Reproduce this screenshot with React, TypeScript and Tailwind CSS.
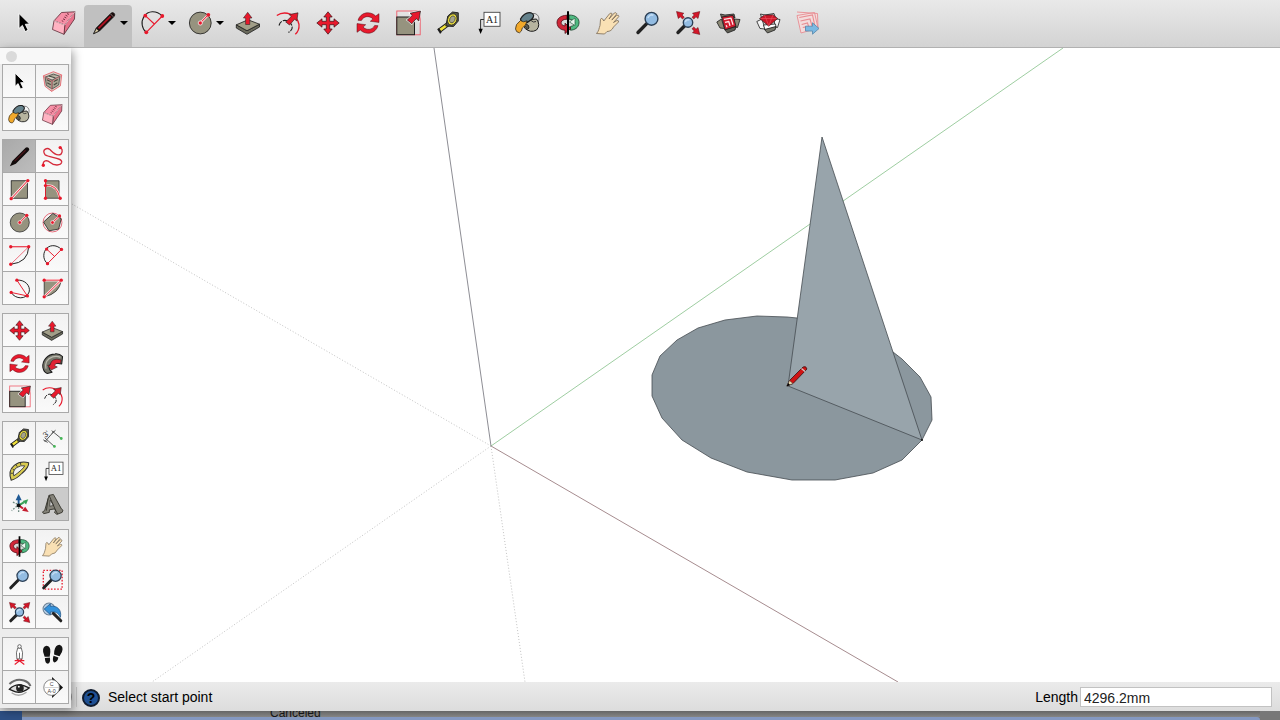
import React, { ReactNode, useState } from 'react';

const RED = '#e8192c';
const STONE = '#96937f';
const INK = '#1c1c1c';

const Dot = ({ x, y }: { x: number; y: number }) => <circle cx={x} cy={y} r="1.9" fill={RED} />;

const Lens = ({ x = 15.5, y = 7.8, r = 6.4 }: { x?: number; y?: number; r?: number }) => (
  <g>
    <path d={`M${x - r * 0.75} ${y + r * 0.75} L2 21.5`} stroke="#222" strokeWidth="3.4" strokeLinecap="round" />
    <circle cx={x} cy={y} r={r} fill="#93bce2" stroke="#2b3f55" strokeWidth="1.4" />
    <path d={`M${x - r * 0.55} ${y - r * 0.1} A${r * 0.6} ${r * 0.6} 0 0 1 ${x + r * 0.3} ${y - r * 0.55}`} stroke="#c3ddf4" strokeWidth="1.6" fill="none" />
  </g>
);

const icons: Record<string, ReactNode> = {
  select: (
    <path d="M7 2.5 V17.5 L10.4 14.4 L13.2 20.6 L16.2 19.2 L13.3 13.3 L17.6 13 Z" fill="#000" stroke="#fff" strokeWidth="0.9" />
  ),
  eraser: (
    <g stroke="#5a2a35" strokeWidth="0.8" strokeLinejoin="round">
      <path d="M9.5 1.5 L22.8 0.8 L12.8 14 L2 9.8 Z" fill="#f78fa6" />
      <path d="M22.8 0.8 L22.5 8 L12 23.3 L12.8 14 Z" fill="#e8718a" />
      <path d="M2 9.8 L12.8 14 L12 23.3 L0.5 18.5 Z" fill="#ffb3c2" />
      <path d="M2 9.8 L12.8 14 L22.8 0.8" fill="none" stroke="#ffd9e0" />
      <path d="M9.8 9.7 L11.3 10.4 M11 7.8 L13 8.8 M12.3 6 L14.3 7 M13.5 4.2 L15.5 5.2 M15 2.6 L17 3.4" stroke="#7b3042" strokeWidth="1" />
    </g>
  ),
  pencil: (
    <g>
      <path d="M1.5 22.8 L4.2 17 L19 2.2 Q20.5 0.8 22.3 2.4 Q23.6 4 22 5.5 L7.5 20 Z" fill="#1e0c0d" stroke="#111" strokeWidth="0.7" />
      <path d="M6.5 17.3 L18.5 5.3" stroke="#b31222" strokeWidth="1.8" />
      <path d="M1.8 22.5 L4.4 17.5 L7 20 Z" fill="#d8cba6" stroke="#111" strokeWidth="0.6" />
      <path d="M18.6 3 L21.3 5.8" stroke="#9a8484" strokeWidth="0.8" />
    </g>
  ),
  darkPencil: (
    <g>
      <path d="M1 23 L3.8 17 L19 2 Q20.5 0.6 22.5 2.2 Q24 4 22.3 5.7 L7.8 20.2 Z" fill="#110b0b" />
      <path d="M6.5 17.3 L19 4.8" stroke="#4a1318" strokeWidth="1.4" />
    </g>
  ),
  arc: (
    <g fill="none">
      <path d="M22.3 5 C16 -1 8 -0.5 4 5.5 C0.5 11 2 18 6.3 21.3" stroke={INK} strokeWidth="1.1" />
      <path d="M22.3 5 L6.3 21.3 M5.3 4.7 L14.3 13" stroke={RED} strokeWidth="1.1" />
      <Dot x={5.3} y={4.7} /><Dot x={22.3} y={5} /><Dot x={6.3} y={21.3} />
    </g>
  ),
  circle: (
    <g>
      <circle cx="12.3" cy="12" r="10.9" fill={STONE} stroke={INK} strokeWidth="0.8" />
      <path d="M12.3 12 L20.3 3.8" stroke="#ffd9dc" strokeWidth="2.4" />
      <path d="M12.3 12 L20.3 3.8" stroke={RED} strokeWidth="1" />
      <circle cx="12.3" cy="12" r="2.1" fill={RED} stroke="#fff" strokeWidth="0.7" />
      <Dot x={20.3} y={3.8} />
    </g>
  ),
  pushPull: (
    <g stroke={INK} strokeWidth="0.8" strokeLinejoin="round">
      <path d="M0.3 13.8 V17 L11 23.3 L23.5 16 V13.2 L11 19.7 Z" fill="#6b6b5d" />
      <path d="M0.3 13.8 L12 8.8 L23.5 13.2 L11 19.7 Z" fill="#a19e88" />
      <path d="M11.7 1.3 L16 7 H13.8 V13.5 H9.6 V7 H7.4 Z" fill={RED} strokeWidth="0.5" />
    </g>
  ),
  offset: (
    <g fill="none">
      <path d="M0.8 4.5 C9 -1 21 3.5 23 13.5 Q23.5 19.5 19.3 23.3" stroke={RED} strokeWidth="1.3" />
      <path d="M3 14.5 C4.5 9 10 7.5 14.3 12 Q19 17.5 12.5 21.5" stroke={INK} strokeWidth="1.1" strokeDasharray="5 1.2" />
      <path d="M22 1.8 L20.8 10 L18.6 8.2 L13.5 14 L9.7 10.9 L15.2 5.6 L13.2 3.6 Z" fill={RED} stroke={INK} strokeWidth="0.6" />
    </g>
  ),
  move: (
    <path
      d="M12 0.8 L16.2 6 H13.7 V10.3 H18 V7.8 L23.2 12 L18 16.2 V13.7 H13.7 V18 H16.2 L12 23.2 L7.8 18 H10.3 V13.7 H6 V16.2 L0.8 12 L6 7.8 V10.3 H10.3 V6 H7.8 Z"
      fill={RED}
      stroke="#3a1014"
      strokeWidth="0.7"
    />
  ),
  rotate: (
    <g fill={RED} stroke="#4d0d14" strokeWidth="0.5" strokeLinejoin="round">
      <path d="M2 9.3 C4.5 1 14 -0.5 19.7 5 L23 2.7 V11.4 L14.3 10.3 L17 7.9 C13 4.2 7.5 5.2 5.3 9.6 Z" />
      <path transform="rotate(180 12 12)" d="M2 9.3 C4.5 1 14 -0.5 19.7 5 L23 2.7 V11.4 L14.3 10.3 L17 7.9 C13 4.2 7.5 5.2 5.3 9.6 Z" />
    </g>
  ),
  scale: (
    <g>
      <rect x="0.8" y="0" width="23.4" height="23.8" fill="none" stroke="#ef5a68" strokeWidth="0.9" />
      <rect x="0.8" y="6" width="17.7" height="17.7" fill={STONE} stroke={INK} strokeWidth="1" />
      <path d="M24.5 0 L22.8 10 L20.2 7.7 L15.8 12.8 L11.3 9 L16.3 4.5 L14 2.3 Z" fill={RED} stroke="#fff" strokeWidth="1.8" />
      <path d="M24.5 0 L22.8 10 L20.2 7.7 L15.8 12.8 L11.3 9 L16.3 4.5 L14 2.3 Z" fill={RED} stroke={INK} strokeWidth="0.7" />
    </g>
  ),
  tape: (
    <g stroke={INK} strokeLinejoin="round">
      <path d="M11.5 13.5 L3 19.8" strokeWidth="4.6" />
      <path d="M12 13.2 L4.3 18.9" stroke="#f0e13a" strokeWidth="2.6" />
      <path d="M2 17.8 L4.8 22.3" strokeWidth="1.8" />
      <path d="M11.8 5 L16.5 1 L22.3 1.8 L22.3 10 L17.5 15.5 L9.8 15 Z" fill="#55554c" strokeWidth="0.9" />
      <ellipse cx="16.3" cy="8.3" rx="4.5" ry="5.8" fill="#efe23e" strokeWidth="0.7" transform="rotate(25 16 8.3)" />
      <ellipse cx="16.5" cy="8.2" rx="2.6" ry="3.7" fill="#a5a48c" strokeWidth="0.5" transform="rotate(25 16 8)" />
    </g>
  ),
  text: (
    <g>
      <path d="M8 8.5 H4.6 V19" fill="none" stroke={INK} strokeWidth="0.9" />
      <path d="M2.5 17.8 H6.8 L4.6 23 Z" fill="#000" />
      <rect x="8" y="1.3" width="16" height="14" fill="#fff" stroke="#444" strokeWidth="0.9" />
      <text x="16" y="11.7" textAnchor="middle" fontSize="10" fontFamily="Liberation Serif, serif" fill="#222">A1</text>
    </g>
  ),
  paint: (
    <g stroke={INK} strokeWidth="1">
      <ellipse cx="18" cy="8" rx="5" ry="5.5" fill="none" stroke="#777" />
      <path d="M10 9 L20.5 8 Q25 14 20.5 19 Q14.5 22.5 8.5 17 Z" fill="#b7b49f" />
      <path d="M4.5 8 Q9 0.5 15 1.8 Q20 4 15.5 8.5 Q10 13.5 5.5 11 Z" fill="#64818b" strokeWidth="1.2" />
      <path d="M8 14 Q10.5 12 12.5 14.5 Q14 17.5 11.5 18.5 Z" fill="#5b5a50" strokeWidth="0.8" />
      <path d="M15 9.5 Q17.5 12 20 10.5" fill="none" stroke="#333" />
      <path d="M4.5 9.5 Q-1 13.5 -0.5 18 Q0 21.5 3.5 21.8 Q6 20.5 6.3 17 Q10.5 14.5 11 9.8 Q7.5 12 4.5 9.5 Z" fill="#f2a92b" strokeWidth="0.7" />
    </g>
  ),
  orbit: (
    <g strokeLinejoin="round">
      <ellipse cx="12" cy="11.5" rx="8" ry="5.5" fill="#d9dcda" />
      <path d="M13 4 C20 4 23.3 7.5 23 12 C22.5 17 18.5 19 14.5 19.2 V15.5 C17.5 15 18.8 13.5 18.8 11.8 C18.5 9.5 16.5 8.3 13 8.2 Z" fill="#4fb981" stroke="#183f2a" strokeWidth="0.8" />
      <path d="M11 4.2 C4 4.5 0.8 8 1 12 C1.5 16.5 4.5 18.8 9 19.3 V22.5 L15 17.3 L9 12.2 V15 C6 14.5 5 13 5.2 11.5 C5.5 9.3 7.5 8.4 11 8.2 Z" fill="#cf2637" stroke="#4e0d16" strokeWidth="0.8" />
      <path d="M19 7 L13.5 11 L19 14.5 Z" fill="#eaf6ef" stroke="#2d6546" strokeWidth="0.7" />
      <path d="M12 0.3 V23.7" stroke="#000" strokeWidth="2" />
    </g>
  ),
  pan: (
    <path
      d="M0.5 22.5 C3 20 3 17 4 14.5 L4.5 8.5 Q5 6.5 6.7 8 L7.8 10 L13.5 2.8 Q15.2 1.2 16.2 2.8 L13 8 L18.3 2 Q20 1 20.8 2.8 L15.8 9 L20.8 4.3 Q22.8 3.6 22.8 5.6 L17.5 11.5 L21 9.5 Q23 9.3 22.5 11 L17.5 16 Q15.5 20.5 11 20.5 L8.5 23 Z"
      fill="#f9e0b4"
      stroke="#7a6a54"
      strokeWidth="0.8"
      strokeLinejoin="round"
    />
  ),
  zoom: <Lens />,
  zoomWindow: (
    <g>
      <rect x="1.5" y="1.5" width="21.5" height="21.5" fill="none" stroke={RED} strokeWidth="1.5" strokeDasharray="1.8 1.8" />
      <Lens />
    </g>
  ),
  zoomExtents: (
    <g>
      <Lens x={12} y={11.5} r={4.7} />
      <g fill="#d31729" stroke="#5a0710" strokeWidth="0.5">
        <path d="M23.8 0.5 L22 7.5 L20 5.8 L17.8 8 L16 6.3 L18.2 4 L16.5 2.2 Z" />
        <path d="M0.5 0.5 L2.3 7.5 L4.3 5.8 L6.5 8 L8.3 6.3 L6.1 4 L7.8 2.2 Z" />
        <path d="M23.8 23.5 L22 16.5 L20 18.2 L17.8 16 L16 17.7 L18.2 20 L16.5 21.8 Z" />
      </g>
    </g>
  ),
  warehouse: (
    <g stroke={INK} strokeWidth="0.8" strokeLinejoin="round">
      <path d="M0.8 11 L5.5 8 L8.5 17.5 L4 17 Z M18 8 L24 8.5 L21.5 16.5 L19 16 Z" fill="#8c8a76" />
      <path d="M4.5 3 L9 4 L18 3 L19 7 L17 5 L5.5 6.5 Z" fill="#77776b" />
      <path d="M8.5 18.5 L20 15.5 L19 19 L11.5 22 Z" fill="#5e5d54" />
      <path d="M5.8 6 L17 4.3 L20 15.3 L9 18.8 Z" fill="#d21c2e" />
      <path d="M8 8.4 L15 7.2 L17 13.7 M9 11.4 L12.8 10.5 L14 14.8 M10.2 14.3 L11 16.3" fill="none" stroke="#ffe2e4" strokeWidth="1.3" />
    </g>
  ),
  extension: (
    <g stroke={INK} strokeWidth="0.8" strokeLinejoin="round">
      <path d="M0.8 10.5 L6 8 L9 18 L4 17.5 Z M18 7.5 L24 8.5 L21.5 16.5 L19 16 Z" fill="#f5f5f5" />
      <path d="M4.5 3 L9 4 L18 2.5 L19.5 7 L6 9 Z" fill="#dedede" />
      <path d="M7.5 14 L19.5 13 L20 16 L9 19 Z" fill="#fff" />
      <path d="M8.5 18.5 L20 15.5 L19 19 L11.5 22 Z" fill="#77776b" />
      <path d="M3.5 7.5 L8.5 4 L17 3.8 L21.7 7.5 L12.8 15.2 Z" fill="#cb1728" strokeWidth="0.6" />
      <path d="M4.5 7.5 H20.5 M8.5 4 L10 7.5 L12.8 15 L15.5 7.5 L17 4" fill="none" stroke="#ef5665" strokeWidth="0.6" />
    </g>
  ),
  layout: (
    <g fill="none" stroke="#e88c92" strokeWidth="0.9">
      <path d="M1 4.5 L18.5 1.5 L22 17 L5 22 Z M1 1 L21.5 2.5 L22 17" fill="#f3dcdc" />
      <path d="M3.3 6.5 L16.5 4 L19 15.5 M4.5 10 L14 8 L16.3 16 M5.7 13.5 L11.5 12 L13.2 17.5 M6.8 16.5 L9.5 16 L10.3 19" strokeWidth="1.1" />
      <path d="M9.5 15.2 H16.5 V11.8 L23 17.5 L16.5 23.2 V20 H9.5 Z" fill="#7bb9e2" stroke="#5d8caf" />
    </g>
  ),
  component: (
    <g strokeLinejoin="round">
      <path d="M1.5 5.5 L13 0.8 L22.5 4.5 L21 17 L11 23.3 L3.5 17.5 Z" fill="#d8d3c6" stroke="#e45561" strokeWidth="0.9" />
      <path d="M3.5 7 L13 3.5 L20.5 6 L19 16 L11.5 20.5 L5 16.5 Z M3.5 7 L11.5 10.3 L20.5 6 M11.5 10.3 V20.5" fill="#aaa694" stroke="#444" strokeWidth="0.9" />
      <path d="M5.5 10 L10 12 M6 13.5 L10 15.7 M13.5 12 L18 9.8 M13.5 16 L17.5 13.5 M8 5.7 L15.5 8" stroke="#4a4a41" strokeWidth="1.3" />
      <path d="M1.5 5.5 L11.5 12 L22.5 4.5 M11.5 12 L11 23.3" fill="none" stroke="#ee6773" strokeWidth="0.7" />
    </g>
  ),
  freehand: (
    <g>
      <path d="M1.5 22 C0.5 16 6 16 9 18.5 C14 23 21.5 22.5 22.5 18.5 C23.5 13 8 13.5 3.5 10 C-1 4 6 1.5 9 4 C12 7 17 13 22 9 C24 5.5 23 2.5 20.5 1.5" fill="none" stroke="#d52a3a" strokeWidth="1.5" />
      <Dot x={1.5} y={22} /><Dot x={20.8} y={1.8} />
    </g>
  ),
  rectangle: (
    <g>
      <rect x="2.5" y="2" width="18.5" height="20" fill={STONE} stroke={INK} strokeWidth="0.9" />
      <path d="M2.5 22.5 L21.5 1.8" stroke="#ffe7e9" strokeWidth="3" />
      <path d="M2.5 22.5 L21.5 1.8" stroke={RED} strokeWidth="1.1" />
      <Dot x={2.5} y={22.5} /><Dot x={21.5} y={1.8} />
    </g>
  ),
  rotatedRect: (
    <g>
      <path d="M4 2 H19.5 V22 H4 Z" fill={STONE} stroke={INK} strokeWidth="0.8" />
      <path d="M4 7.5 Q17 5.5 20.5 22" fill="none" stroke="#ffdfe1" strokeWidth="2.5" />
      <path d="M4 2 V22 M4 7.5 Q17 5.5 20.5 22" fill="none" stroke={RED} strokeWidth="1" />
      <Dot x={4} y={2} /><Dot x={4} y={7.5} /><Dot x={4} y={22} /><Dot x={20.8} y={22} />
    </g>
  ),
  polygon: (
    <g>
      <circle cx="12" cy="12" r="10.8" fill="none" stroke="#e2596a" strokeWidth="1" />
      <path d="M12.5 1.6 L22 7.8 L19 19.5 L8 21.5 L1.8 11.5 Z" fill={STONE} stroke={INK} strokeWidth="0.9" />
      <path d="M12 12 L20 4.5" stroke="#ffd9dc" strokeWidth="2.4" />
      <path d="M12 12 L20 4.5" stroke={RED} />
      <circle cx="12" cy="12" r="2.1" fill={RED} stroke="#fff" strokeWidth="0.7" />
      <Dot x={20} y={4.5} />
    </g>
  ),
  chordArc: (
    <g fill="none">
      <path d="M22.5 2 Q22 20 2 22" stroke={INK} strokeWidth="1.1" />
      <path d="M2 2 H22.5" stroke={RED} strokeWidth="1.2" />
      <path d="M22.5 2 L2 22" stroke="#ec6c7c" strokeWidth="1.1" />
      <Dot x={2} y={2} /><Dot x={22.5} y={2} /><Dot x={2} y={22} />
    </g>
  ),
  threePointArc: (
    <g fill="none">
      <path d="M9 2.5 C18 1.5 25 9 23 16 C20 25 7 24.5 2.5 16.5" stroke={INK} strokeWidth="1.1" />
      <path d="M9 2.5 L21 20.5 L2.5 16.5" stroke={RED} strokeWidth="1.1" />
      <Dot x={9} y={2.5} /><Dot x={21} y={20.5} /><Dot x={2.5} y={16.5} />
    </g>
  ),
  pie: (
    <g>
      <path d="M2.5 2.5 H22 Q20 18 2.5 21.5 Z" fill={STONE} stroke={INK} strokeWidth="0.8" />
      <path d="M2.5 2.5 H22 L2.5 21.5" fill="none" stroke="#ffdfe1" strokeWidth="2.8" />
      <path d="M2.5 2.5 H22 L2.5 21.5" fill="none" stroke={RED} strokeWidth="0.9" />
      <Dot x={2.5} y={2.5} /><Dot x={22} y={2.5} /><Dot x={2.5} y={21.5} />
    </g>
  ),
  followMe: (
    <g stroke={INK} strokeLinejoin="round">
      <path d="M23.5 4 Q20 0.5 15 1 C6 1.5 0 9 1 16.5 Q2 22 6 23.5 L11.5 22 Q7 18.5 8.5 14.5 Q11 10 22.5 12.5 Z" fill="#77776c" strokeWidth="1.2" />
      <path d="M4.5 18 Q2.5 8 12 4.5 Q17 3 21 5" fill="none" stroke="#b9b8ad" strokeWidth="1.4" />
      <path d="M22 8 Q11 4.5 9 14 H6.5 L10.5 19.5 L17.5 16 L14.5 14.5 Q15 11 21 12 Z" fill="#df2233" strokeWidth="0.6" />
    </g>
  ),
  dimension: (
    <g fill="none" stroke="#444" strokeWidth="1">
      <path d="M3 16 L14 3.5 M3 11 L14 21 M11 3 L22 12 M1.5 13.5 L6.5 16.5 M11 6.5 L15.5 2.5" />
      <text x="1" y="9" fontSize="9" fontFamily="Liberation Sans, sans-serif" fill="#333" stroke="none" transform="rotate(-40 6 6)">3'</text>
      <circle cx="14.2" cy="21" r="1.6" fill="#46b758" stroke="none" />
      <circle cx="22" cy="12" r="1.6" fill="#46b758" stroke="none" />
    </g>
  ),
  protractor: (
    <g stroke="#333" strokeLinejoin="round">
      <path d="M2.5 22 Q-1.5 11 6 5 Q13 -0.5 22.5 2 Q23 7 15 14 Q8 21 2.5 22 Z" fill="#d9cb50" strokeWidth="1.2" />
      <path d="M5.5 17 Q3.8 10.5 9 7.5 Q13.5 4.5 18 5.5 Q15.5 10 5.5 17 Z" fill="#f4f4f0" strokeWidth="1" />
      <path d="M4 9 L6 10.5 M8 4.5 L9.5 6.5 M13 2 L13.5 4.5 M2 14 L4.5 14" strokeWidth="1" />
    </g>
  ),
  axes: (
    <g strokeWidth="2.2">
      <path d="M11 13 V6" stroke="#205a95" />
      <path d="M11 0 L14.5 7 H7.5 Z" fill="#205a95" />
      <path d="M11 13 L17 9.5" stroke="#36a155" />
      <path d="M22 6 L19.5 12 L15.5 8 Z" fill="#36a155" />
      <path d="M11 13 L16 16.5" stroke="#c51c2e" />
      <path d="M22.5 20.5 L15 19 L18.5 14.5 Z" fill="#c51c2e" />
      <path d="M11 15 V22 M9.5 11.5 L4 9 M9 14 L3 19" strokeWidth="1.5" stroke="#6f8b82" strokeDasharray="2 1.5" />
      <circle cx="11" cy="13" r="2.2" fill="#111" />
    </g>
  ),
  text3d: (
    <g stroke="#33322c" strokeLinejoin="round">
      <path d="M8 1.5 L13 0.5 L22.5 17.5 L24 18.5 L23 21 L17 23.3 L14 20.8 L15.5 19.5 L14.5 17 L8.5 18 L8.3 21 L2 22.5 L0.5 20.5 L3 19 Z" fill="#85837a" strokeWidth="1" />
      <path d="M9.3 7 L8.8 14 L13.3 13 Z" fill="#cbcbcb" strokeWidth="0.8" />
      <path d="M8 1.5 L15.5 18.5 L18 23 M7 5 L5 19" strokeWidth="1" />
    </g>
  ),
  previous: (
    <g>
      <circle cx="8" cy="8" r="6.8" fill="#b5cfe8" stroke="#6d8193" strokeWidth="1.2" />
      <path d="M13 13 L21.5 21.5" stroke="#222" strokeWidth="3.4" strokeLinecap="round" />
      <path d="M2.5 8 L9.5 2 V5 C17 3.5 23 9 21 17.5 C18.5 12 14.5 10.5 9.5 11.5 V14.5 Z" fill="#3492db" stroke="#1a4c7c" strokeWidth="0.8" />
    </g>
  ),
  camera: (
    <g fill="#fff" stroke="#333" strokeWidth="0.8">
      <path d="M6.5 23.5 L15 17 M17.5 23.5 L9 17 M6.5 19 H17.5" stroke={RED} strokeWidth="1.3" fill="none" />
      <path d="M10 4.5 Q7.5 9 9 17 H15 Q16.5 9 14 4.5 Z" />
      <circle cx="12" cy="2.8" r="2" />
      <path d="M12 10 V16.5" />
    </g>
  ),
  walk: (
    <g fill="#141414">
      <path d="M1.3 9 Q0.5 3 5 2 Q10 2.5 9.5 9 L8.8 14.5 H3 Z M3.3 16 L9 15.5 Q10 21.5 6.8 22.5 Q3.3 22.5 3.3 16 Z" />
      <path d="M14 8 Q15.5 0.5 20.5 1 Q25 3 22.8 9 L20 14 L13.8 12 Z M13.2 13.5 L18.8 15.5 Q17.5 21 14 21 Q11.3 19.5 13.2 13.5 Z" />
    </g>
  ),
  look: (
    <g fill="none" stroke={INK}>
      <path d="M0.5 8 Q8 1 17 4 Q23 6 24.5 10.5" strokeWidth="2.4" stroke="#6b6b6b" />
      <path d="M0.5 14 Q9 5 23 12.5 Q13 20.5 4 15.5 Z" fill="#dcdcdc" strokeWidth="1.5" />
      <circle cx="12.5" cy="12.5" r="4.4" fill="#222" stroke="none" />
      <circle cx="11.2" cy="11" r="1.1" fill="#fff" stroke="none" />
      <path d="M3 18 Q11 24 20 17.5" stroke="#a8a8a8" strokeWidth="1.5" />
    </g>
  ),
  section: (
    <g>
      <path d="M11.5 0 L24 12 L11.5 24 Z" fill="#111" />
      <circle cx="11" cy="12" r="9" fill="#fff" stroke="#666" strokeWidth="0.9" />
      <path d="M3 12 H19.5" stroke="#aaa" strokeWidth="0.6" />
      <text x="11" y="10.3" textAnchor="middle" fontSize="6" fontFamily="Liberation Sans, sans-serif" fill="#444">C</text>
      <text x="11" y="18" textAnchor="middle" fontSize="6" fontFamily="Liberation Sans, sans-serif" fill="#444">A-0</text>
    </g>
  )
};

const Icon = ({ name, className }: { name: string; className: string }) => (
  <svg viewBox="0 0 24 24" fill="none" className={`${className} overflow-visible shrink-0`} aria-hidden="true">
    {icons[name]}
  </svg>
);

const toolbar = [
  { icon: 'select', label: 'Select' },
  { icon: 'eraser', label: 'Eraser' },
  { icon: 'pencil', label: 'Line', menu: true },
  { icon: 'arc', label: 'Arc', menu: true },
  { icon: 'circle', label: 'Circle', menu: true },
  { icon: 'pushPull', label: 'Push/Pull' },
  { icon: 'offset', label: 'Offset' },
  { icon: 'move', label: 'Move' },
  { icon: 'rotate', label: 'Rotate' },
  { icon: 'scale', label: 'Scale' },
  { icon: 'tape', label: 'Tape Measure' },
  { icon: 'text', label: 'Text' },
  { icon: 'paint', label: 'Paint Bucket' },
  { icon: 'orbit', label: 'Orbit' },
  { icon: 'pan', label: 'Pan' },
  { icon: 'zoom', label: 'Zoom' },
  { icon: 'zoomExtents', label: 'Zoom Extents' },
  { icon: 'warehouse', label: '3D Warehouse' },
  { icon: 'extension', label: 'Extension Warehouse' },
  { icon: 'layout', label: 'Send to LayOut' }
];

const palette = [
  ['select', 'component', 'paint', 'eraser'],
  ['darkPencil', 'freehand', 'rectangle', 'rotatedRect', 'circle', 'polygon', 'chordArc', 'arc', 'threePointArc', 'pie'],
  ['move', 'pushPull', 'rotate', 'followMe', 'scale', 'offset'],
  ['tape', 'dimension', 'protractor', 'text', 'axes', 'text3d'],
  ['orbit', 'pan', 'zoom', 'zoomWindow', 'zoomExtents', 'previous'],
  ['camera', 'walk', 'look', 'section']
];

const cellStyle = (name: string) => {
  if (name === 'darkPencil') return 'bg-linear-to-br from-[#a9a9a9] to-[#bdbdbd]';
  if (name === 'text3d') return 'bg-[#cbcbcb]';
  return 'bg-linear-to-b from-[#f2f2f2] to-[#fafafa]';
};

const Toolbar = () => (
  <header className="h-12 shrink-0 flex items-end pl-1 bg-linear-to-b from-[#e9e9e9] to-[#d3d3d3] border-b border-[#b1b1b1]">
    {toolbar.map((tool) => (
      <button
        key={tool.icon}
        aria-label={tool.label}
        className={`h-[42px] flex items-center pb-1.5 pl-2 ${tool.menu ? 'w-12 gap-1' : 'w-10'} ${tool.icon === 'pencil' ? 'bg-[#c0c0c0] rounded-t-sm' : ''}`}
      >
        <Icon name={tool.icon} className="size-6" />
        {tool.menu && (
          <svg viewBox="0 0 8 4" className="w-2 h-1 shrink-0"><path d="M0 0 H8 L4 4 Z" /></svg>
        )}
      </button>
    ))}
  </header>
);

const ToolPalette = () => (
  <aside className="absolute left-0 top-12 z-10 px-0.5 pb-1 bg-[#ececec] shadow-[2px_3px_9px_rgba(0,0,0,0.4)]">
    <div className="h-4 -mx-0.5 pl-1.5 flex items-center bg-[#f8f8f8]">
      <button aria-label="Close palette" className="size-[11px] rounded-full bg-[#dadada]" />
    </div>
    <div className="flex flex-col gap-2">
      {palette.map((group) => (
        <div key={group[0]} className="grid grid-cols-2 gap-px bg-[#a9a9a9] border border-[#a9a9a9]">
          {group.map((name) => (
            <button key={name} aria-label={name} className={`size-8 flex items-center justify-center ${cellStyle(name)}`}>
              <Icon name={name} className="size-[21px]" />
            </button>
          ))}
        </div>
      ))}
    </div>
  </aside>
);

const Viewport = () => (
  <main className="flex-1 min-h-0 bg-white overflow-hidden">
    <svg viewBox="0 48 1280 634" preserveAspectRatio="xMinYMin slice" className="w-full h-full" role="img" aria-label="Model view">
      {/* axes */}
      <g fill="none" strokeWidth="0.7">
        <path d="M491 446 L434 48" stroke="#5c5c66" />
        <path d="M491 446 L1063 48" stroke="#74b878" />
        <path d="M491 446 L898 682" stroke="#805a5e" />
        <path d="M491 446 L525 682 M491 446 L152 682 M491 446 L72 204" stroke="#a8a8a8" strokeDasharray="1 2" />
      </g>
      {/* base disc and upright face */}
      <g stroke="#454b50" strokeWidth="0.8" strokeLinejoin="round">
        <path
          d="M757 316 L787 317 L797 318 L893 352 L902 359 L920 377 L931 397 L932 420 L922 440 L902 460 L873 473 L835 480 L792 480 L747 472 L711 458 L682 440 L662 418 L652 396 L652 375 L660 356 L677 340 L698 328 L725 320 Z"
          fill="#8b979e"
        />
        <path d="M822 137 L788 386 L922 440 Z" fill="#98a4ab" />
      </g>
      <circle cx="922" cy="440" r="1" fill="#111" />
      {/* pencil cursor */}
      <g strokeLinejoin="round">
        <path d="M787 386 L789.5 380.5 L803 367 Q806 365.5 807 369 L793 383.5 Z" fill="#cf1414" stroke="#3a1111" strokeWidth="0.8" />
        <path d="M787 386 L789.5 380.5 L793 383.5 Z" fill="#ebd9ac" stroke="#333" strokeWidth="0.5" />
        <path d="M786.5 386.5 L788.3 383 L790 385 Z" fill="#000" />
        <path d="M801.5 368.5 L805 371.5" stroke="#ccc" strokeWidth="1.2" />
      </g>
    </svg>
  </main>
);

const StatusBar = () => {
  const [length, setLength] = useState('4296.2mm');
  return (
    <footer className="h-[29px] shrink-0 flex items-center pl-[54px] pr-2 text-sm text-black bg-linear-to-b from-[#ebebeb] to-[#dcdcdc]">
      <span className="size-[18px] rounded-full bg-[#999]" />
      <span className="h-5 w-px mx-1 bg-[#c6c6c6]" />
      <button aria-label="Help" className="size-[18px] ml-px mt-0.5 rounded-full border-2 border-[#101b2e] bg-[#1f5093] text-sm leading-none font-bold flex items-center justify-center">
        ?
      </button>
      <p className="ml-2 flex-1">Select start point</p>
      <label htmlFor="length" className="mr-0.5">Length</label>
      <input
        id="length"
        value={length}
        onChange={(e) => setLength(e.target.value)}
        className="w-48 h-5 px-[3px] pt-0.5 bg-white border border-[#c2c2c2] text-sm text-[#222] outline-none"
      />
    </footer>
  );
};

// sliver of the window that sits behind the application
const BackgroundWindow = () => (
  <div className="h-[9px] shrink-0 pl-[22px] pr-5 bg-linear-to-r from-[#2e5085] from-50% to-[#777] to-50%">
    <div className="h-1.5 flex items-end overflow-hidden bg-linear-to-b from-[#666] to-[#858585] pl-[248px]">
      <span className="text-xs leading-none -mb-0.5 text-[#161616]">Canceled</span>
    </div>
    <div className="h-[3px] bg-[#8498c1] rounded-tr-sm" />
  </div>
);

const App: React.FC = () => {
  return (
    <div className="relative h-screen flex flex-col overflow-hidden font-['Liberation_Sans',Arial,sans-serif]">
      <Toolbar />
      <Viewport />
      <StatusBar />
      <BackgroundWindow />
      <ToolPalette />
    </div>
  );
};

export default App;
